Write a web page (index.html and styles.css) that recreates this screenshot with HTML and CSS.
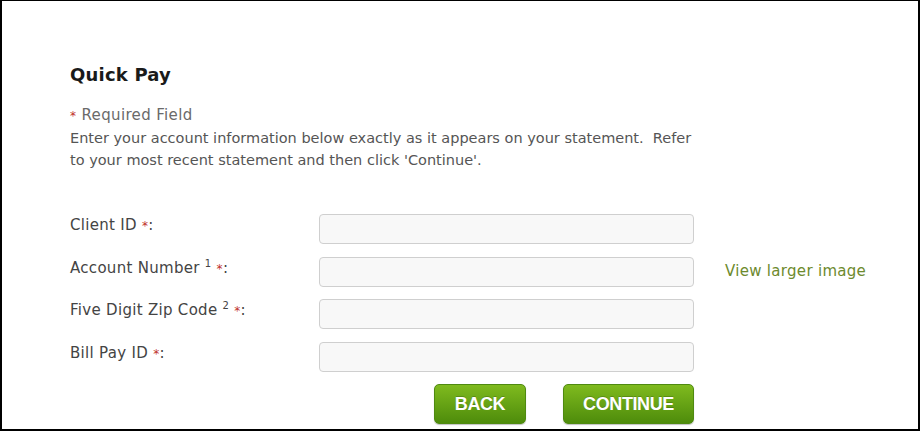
FILE: index.html
```html
<!DOCTYPE html>
<html>
<head>
<meta charset="utf-8">
<link rel="stylesheet" href="styles.css">
</head>
<body>
<div class="frame">
  <div class="content">
    <h1 class="title">Quick Pay</h1>
    <p class="req"><span class="star">*</span> Required Field</p>
    <p class="intro">Enter your account information below exactly as it appears on your statement.&nbsp; Refer to your most recent statement and then click 'Continue'.</p>
    <form class="form">
      <div class="row">
        <label class="label">Client ID <span class="star">*</span>:</label>
        <input class="field" type="text">
      </div>
      <div class="row">
        <label class="label">Account Number <sup class="sup">1</sup> <span class="star">*</span>:</label>
        <input class="field" type="text">
        <a class="link" href="#">View larger image</a>
      </div>
      <div class="row">
        <label class="label">Five Digit Zip Code <sup class="sup">2</sup> <span class="star">*</span>:</label>
        <input class="field" type="text">
      </div>
      <div class="row">
        <label class="label">Bill Pay ID <span class="star">*</span>:</label>
        <input class="field" type="text">
      </div>
      <div class="buttons">
        <button class="btn btn-back" type="button">BACK</button>
        <button class="btn btn-continue" type="button">CONTINUE</button>
      </div>
    </form>
  </div>
</div>
</body>
</html>
```
FILE: styles.css
```css
html, body {
  margin: 0;
  padding: 0;
  background: #fff;
}
.frame {
  box-sizing: border-box;
  width: 920px;
  height: 431px;
  border: 2px solid #000;
  border-top-width: 1px;
  overflow: hidden;
  font-family: "DejaVu Sans", sans-serif;
  color: #555;
}
.content {
  padding: 63px 0 0 68px;
}
.title {
  margin: 0;
  font-size: 18px;
  font-weight: bold;
  letter-spacing: 0.2px;
  color: #1a1a1a;
  line-height: 22px;
}
.req {
  margin: 18px 0 0;
  font-size: 15px;
  letter-spacing: 0.35px;
  line-height: 22px;
  color: #6a6a6a;
}
.star {
  color: #c0302a;
  font-size: 12px;
}
.intro {
  margin: 0;
  width: 640px;
  font-size: 14.5px;
  letter-spacing: 0;
  line-height: 22px;
  color: #555;
}
.form {
  margin-top: 43px;
}
.row {
  display: flex;
  align-items: flex-start;
  height: 30px;
  margin-bottom: 12.7px;
}
.label {
  width: 249px;
  font-size: 15px;
  letter-spacing: 0.3px;
  line-height: 23px;
  color: #444;
}
.sup {
  font-size: 10px;
  vertical-align: 6px;
  line-height: 0;
}
.field {
  box-sizing: border-box;
  width: 375px;
  height: 30px;
  margin: 0;
  border: 1px solid #cfcfcf;
  border-radius: 4px;
  background: #f8f8f8;
}
.link {
  align-self: center;
  margin-left: 31px;
  margin-bottom: 2px;
  font-size: 15px;
  letter-spacing: 0.3px;
  color: #6d8a2e;
  text-decoration: none;
}
.buttons {
  display: flex;
  gap: 37px;
  margin-left: 364px;
  margin-top: -0.7px;
}
.btn {
  height: 40px;
  border: 1px solid #4f8a10;
  border-radius: 5px;
  background: linear-gradient(#7fba1e, #4e8c0b);
  color: #fff;
  font-family: "Liberation Sans", Arial, sans-serif;
  font-weight: bold;
  font-size: 18px;
  letter-spacing: -0.4px;
  padding: 0;
  text-shadow: 0 -1px 0 rgba(0,0,0,0.2);
  box-shadow: 0 1px 1px rgba(0,0,0,0.25);
}
.btn-back {
  width: 92px;
}
.btn-continue {
  width: 131px;
}
```
